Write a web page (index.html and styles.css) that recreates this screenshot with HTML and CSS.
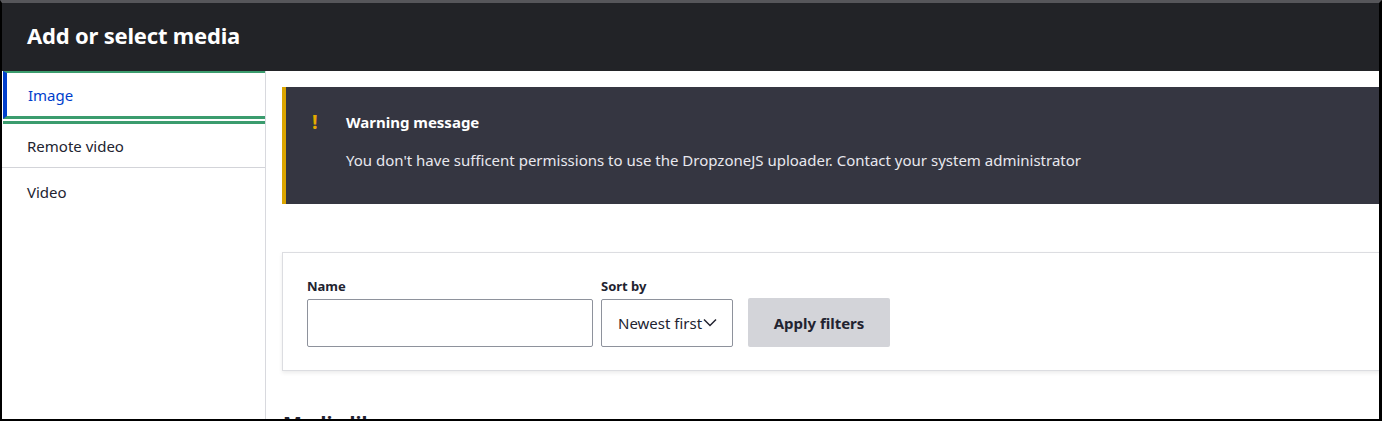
FILE: index.html
```html
<!DOCTYPE html>
<html lang="en">
<head>
<meta charset="utf-8">
<title>Add or select media</title>
<link rel="stylesheet" href="styles.css">
</head>
<body>
<div class="frame">
  <header class="titlebar">
    <h1 class="title">Add or select media</h1>
  </header>
  <div class="content">
    <nav class="sidebar">
      <a class="tab active" href="#">Image</a>
      <a class="tab" href="#">Remote video</a>
      <a class="tab last" href="#">Video</a>
    </nav>
    <main class="main">
      <div class="warning">
        <span class="warning-icon">!</span>
        <div class="warning-body">
          <h2 class="warning-title">Warning message</h2>
          <p class="warning-text">You don't have sufficent permissions to use the DropzoneJS uploader. Contact your system administrator</p>
        </div>
      </div>
      <form class="filters">
        <div class="field">
          <label class="label">Name</label>
          <input class="input" type="text">
        </div>
        <div class="field">
          <label class="label">Sort by</label>
          <div class="select">
            <span>Newest first</span>
            <svg class="chev" width="14" height="9" viewBox="0 0 14 9"><path d="M1 1.5 7 7.5 13 1.5" fill="none" stroke="#222330" stroke-width="1.5"/></svg>
          </div>
        </div>
        <button class="btn" type="button">Apply filters</button>
      </form>
      <h2 class="list-heading">Media library</h2>
    </main>
  </div>
</div>
</body>
</html>
```
FILE: styles.css
```css
* { box-sizing: border-box; }
html, body { margin: 0; padding: 0; background: #000; }
body { font-family: "Noto Sans", "Open Sans", sans-serif; color: #222330; }
.frame {
  width: 1382px;
  height: 421px;
  border-top: 3px solid #56565a;
  border-left: 2px solid #000;
  border-right: 3px solid #000;
  border-bottom: 2px solid #000;
  background: #fff;
  overflow: hidden;
  display: flex;
  flex-direction: column;
}
.titlebar {
  height: 68px;
  flex: none;
  background: #222327;
  display: flex;
  align-items: center;
  padding: 0 0 4px 25px;
}
.title {
  margin: 0;
  color: #fff;
  font-size: 22px;
  font-weight: 700;
  letter-spacing: -0.2px;
}
.content { flex: 1; display: flex; min-height: 0; }
.sidebar {
  width: 264px;
  flex: none;
  border-right: 1px solid #d8d9de;
  display: flex;
  flex-direction: column;
}
.tab {
  display: flex;
  align-items: center;
  padding-left: 25px;
  height: 44px;
  font-size: 15px;
  color: #222330;
  text-decoration: none;
  border-bottom: 1px solid #d3d4d9;
}
.tab.last { height: 48px; border-bottom: 0; }
.tab.active {
  height: 48px;
  color: #003ecc;
  padding-left: 21px;
  border-left: 4px solid #003ecc;
  border-top: 2px solid #3b9c6e;
  border-bottom: 3px solid #3b9c6e;
  box-shadow: 0 2px 0 #fff, 0 5px 0 #3b9c6e;
  margin-bottom: 5px;
  margin-left: 1px;
}
.main {
  flex: 1;
  min-width: 0;
  padding: 16px 0 0 16px;
}
.warning {
  display: flex;
  background: #353641;
  border-left: 4px solid #dba500;
  height: 117px;
  margin-right: -20px;
  padding: 24px 0 0 26px;
}
.warning-icon {
  width: 34px;
  flex: none;
  color: #e4a900;
  font-weight: 700;
  font-size: 20px;
  line-height: 22px;
}
.warning-title {
  margin: 0;
  color: #fff;
  font-size: 15px;
  font-weight: 700;
  line-height: 22px;
}
.warning-text {
  margin: 16px 0 0;
  color: #e8e8ee;
  font-size: 15px;
  line-height: 22px;
}
.filters {
  margin: 48px -20px 0 0;
  border: 1px solid #dcdde1;
  box-shadow: 0 2px 4px rgba(0,0,0,0.08);
  padding: 24px 24px 23px;
  display: flex;
  align-items: flex-end;
  gap: 8px;
}
.field { display: flex; flex-direction: column; gap: 4px; }
.label { font-size: 13px; font-weight: 700; line-height: 18px; color: #222330; }
.input {
  width: 286px;
  height: 48px;
  border: 1px solid #8e929c;
  border-radius: 2px;
  background: #fff;
  margin: 0;
}
.select {
  width: 132px;
  height: 48px;
  border: 1px solid #8e929c;
  border-radius: 2px;
  display: flex;
  align-items: center;
  padding-left: 16px;
  font-size: 15px;
  color: #222330;
}
.chev { margin-left: 1px; margin-top: -2px; }
.btn {
  margin-left: 7px;
  width: 142px;
  height: 49px;
  border: 0;
  border-radius: 2px;
  background: #d3d4d9;
  font-family: inherit;
  font-size: 15px;
  font-weight: 700;
  color: #222330;
}
.list-heading {
  margin: 39px 0 0 1px;
  font-size: 20px;
  line-height: 27px;
  font-weight: 700;
  color: #222330;
}
```
